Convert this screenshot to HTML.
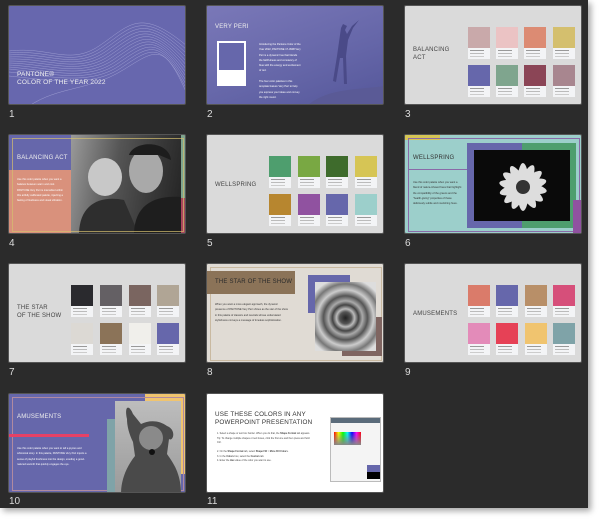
<!DOCTYPE html>
<html><head><meta charset="utf-8"><style>
*{margin:0;padding:0;box-sizing:border-box}
body{width:600px;height:520px;background:#fff;position:relative;overflow:hidden;font-family:"Liberation Sans",sans-serif}
#panel{position:absolute;left:0;top:0;width:588px;height:508px;background:#2b2b2b;box-shadow:3px 3px 6px rgba(0,0,0,.35)}
.s{position:absolute;width:178px;height:100px;border-radius:2px;overflow:hidden;border:1px solid #555}
.n{position:absolute;color:#ddd;font-size:10px}
.a{position:absolute}
.sw{position:absolute;width:22px;height:32px;background:#f3f4f6}
.sw i{display:block;height:21px}
.sw b{display:block;margin:2px 2px 0;height:1px;background:#999;width:14px;box-shadow:0 3px 0 #bbb,0 6px 0 #ccc}
.t{position:absolute;font-size:7.5px;letter-spacing:.2px}
.p{position:absolute;font-size:2.6px;line-height:5.3px;color:#fff}
</style></head><body>
<div id="panel">

<!-- 1 -->
<div class="s" style="left:8px;top:5px;background:#6767ae">
<svg class="a" width="178" height="100" style="left:0;top:0">
<g fill="none" stroke="#c8c8ee" stroke-width=".35" opacity=".8">
<path d="M0 45 C40 40 60 60 90 40 S130 0 178 40"/>
<path d="M0 47 C40 43 62 62 92 42 S132 3 178 44"/>
<path d="M0 49 C40 46 64 64 94 44 S134 6 178 48"/>
<path d="M0 51 C40 49 66 66 96 46 S136 9 178 52"/>
<path d="M0 53 C40 52 68 68 98 48 S138 12 178 56"/>
<path d="M0 55 C40 55 70 70 100 50 S140 15 178 60"/>
<path d="M0 57 C40 58 72 72 102 52 S142 18 178 64"/>
<path d="M0 59 C40 61 74 74 104 54 S144 21 178 68"/>
<path d="M0 61 C40 64 76 76 106 56 S146 24 178 72"/>
<path d="M0 63 C40 67 78 78 108 58 S148 27 178 76"/>
<path d="M0 66 C40 70 80 80 110 60 S150 30 178 80"/>
<path d="M0 70 C40 74 82 82 112 62 S152 33 178 84"/>
<path d="M20 100 C50 80 80 85 114 64 S155 36 178 88"/>
</g></svg>
<div class="t" style="left:8px;top:65px;color:#eee;font-size:6.5px;line-height:8px">PANTONE®<br>COLOR OF THE YEAR 2022</div>
</div>
<div class="n" style="left:9px;top:109px">1</div>

<!-- 2 -->
<div class="s" style="left:206px;top:5px;background:linear-gradient(160deg,#7a78b8,#6566a8 60%,#55579a)">
<div class="t" style="left:8px;top:18px;color:#eee;font-size:6px">VERY PERI</div>
<div class="a" style="left:10px;top:35px;width:29px;height:45px;background:#fff"><div style="margin:2px;height:27px;background:#6667ab"></div></div>
<div class="p" style="left:52px;top:36px;width:42px">Introducing the Pantone Color of the Year 2022, PANTONE 17-3938 Very Peri is a dynamic hue that blends the faithfulness and constancy of blue with the energy and excitement of red.<br><br>The four color palettes in this template feature Very Peri to help you express your ideas and convey the right mood.</div>
<svg class="a" width="178" height="100" style="left:0;top:0">
<path d="M128 14 L134 22 L132 36 L130 50 L126 75 L129 76 L133 52 L136 52 L137 78 L140 78 L139 50 L141 34 L146 22 L152 14 L145 20 L140 28 L138 24 L140 20 L136 18 L134 22 Z" fill="#4a4a88"/>
<path d="M100 100 C120 82 150 84 178 80 L178 100Z" fill="#5a5a96"/></svg>
</div>
<div class="n" style="left:207px;top:109px">2</div>

<!-- 3 -->
<div class="s" style="left:404px;top:5px;background:#dadada">
<div class="t" style="left:8px;top:40px;color:#444;font-size:6px;line-height:8px">BALANCING<br>ACT</div>
<div class="sw" style="left:63px;top:21px"><i style="background:#c9a9aa"></i><b></b></div>
<div class="sw" style="left:91px;top:21px"><i style="background:#ebc3c4"></i><b></b></div>
<div class="sw" style="left:119px;top:21px"><i style="background:#dc8b73"></i><b></b></div>
<div class="sw" style="left:148px;top:21px"><i style="background:#d4bf6e"></i><b></b></div>
<div class="sw" style="left:63px;top:59px"><i style="background:#6667ab"></i><b></b></div>
<div class="sw" style="left:91px;top:59px"><i style="background:#7fa58e"></i><b></b></div>
<div class="sw" style="left:119px;top:59px"><i style="background:#8b4556"></i><b></b></div>
<div class="sw" style="left:148px;top:59px"><i style="background:#a8868f"></i><b></b></div>
</div>
<div class="n" style="left:405px;top:109px">3</div>

<!-- 4 -->
<div class="s" style="left:8px;top:134px;background:#777">
<div class="a" style="left:62px;top:0;width:110px;height:100px;background:linear-gradient(100deg,#9a9a9a,#555 40%,#3a3a3a 70%,#222)"></div>
<svg class="a" width="178" height="100" style="left:0;top:0">
<ellipse cx="96" cy="42" rx="17" ry="19" fill="#c8c8c8"/>
<ellipse cx="137" cy="36" rx="17" ry="22" fill="#a9a9a9"/>
<path d="M120 20 C125 5 160 5 162 25 L150 20 Z" fill="#1d1d1d"/>
<path d="M70 100 C70 70 90 60 115 65 L130 100Z" fill="#2e2e2e"/>
<path d="M125 100 C125 70 145 60 172 62 L172 100Z" fill="#1e1e1e"/></svg>
<div class="a" style="left:0;top:0;width:62px;height:35px;background:#6667ab"></div>
<div class="t" style="left:8px;top:20px;color:#eee;font-size:6px">BALANCING ACT</div>
<div class="a" style="left:0;top:35px;width:62px;height:65px;background:#d9917c"></div>
<div class="p" style="left:8px;top:42px;width:50px">Use this color palette when you want a balance between warm and cool. PANTONE Very Peri is intensified within this artfully calibrated palette, injecting a feeling of liveliness and visual vibration.</div>
<div class="a" style="left:172px;top:0;width:6px;height:63px;background:#7fa58e"></div>
<div class="a" style="left:172px;top:63px;width:6px;height:37px;background:#a9465c"></div>
<div class="a" style="left:3px;top:3px;width:172px;height:94px;border:1px solid rgba(212,191,110,.7)"></div>
</div>
<div class="n" style="left:9px;top:238px">4</div>

<!-- 5 -->
<div class="s" style="left:206px;top:134px;background:#dadada">
<div class="t" style="left:8px;top:47px;color:#444;font-size:6px">WELLSPRING</div>
<div class="sw" style="left:62px;top:21px"><i style="background:#4e9e6e"></i><b></b></div>
<div class="sw" style="left:91px;top:21px"><i style="background:#79a843"></i><b></b></div>
<div class="sw" style="left:119px;top:21px"><i style="background:#3e6b2c"></i><b></b></div>
<div class="sw" style="left:148px;top:21px"><i style="background:#d6c555"></i><b></b></div>
<div class="sw" style="left:62px;top:59px"><i style="background:#b7862f"></i><b></b></div>
<div class="sw" style="left:91px;top:59px"><i style="background:#9052a0"></i><b></b></div>
<div class="sw" style="left:119px;top:59px"><i style="background:#6667ab"></i><b></b></div>
<div class="sw" style="left:148px;top:59px"><i style="background:#9ccfcb"></i><b></b></div>
</div>
<div class="n" style="left:207px;top:238px">5</div>

<!-- 6 -->
<div class="s" style="left:404px;top:134px;background:#9ccfcb">
<div class="a" style="left:0;top:0;width:35px;height:5px;background:#d6c555"></div>
<div class="a" style="left:3px;top:3px;width:172px;height:94px;border:1px solid #8a6aa8"></div>
<div class="a" style="left:3px;top:34px;width:59px;height:1px;background:#8a6aa8"></div>
<div class="t" style="left:8px;top:20px;color:#333;font-size:6px">WELLSPRING</div>
<div class="p" style="left:8px;top:45px;width:50px;color:#333">Use this color palette when you want a blend of nature-infused hues that highlight the compatibility of the greens and the "health-giving" properties of these deliciously subtle and nourishing hues.</div>
<div class="a" style="left:62px;top:8px;width:55px;height:85px;background:#6667ab"></div>
<div class="a" style="left:117px;top:8px;width:54px;height:85px;background:#4e9e6e"></div>
<div class="a" style="left:168px;top:65px;width:10px;height:35px;background:#9052a0"></div>
<div class="a" style="left:69px;top:15px;width:96px;height:71px;background:#0a0a0a"></div>
<svg class="a" width="178" height="100" style="left:0;top:0">
<g fill="#ddd" transform="translate(118 52)">
<ellipse rx="6" ry="24" transform="rotate(0)"/><ellipse rx="6" ry="24" transform="rotate(25)"/><ellipse rx="6" ry="24" transform="rotate(50)"/><ellipse rx="6" ry="24" transform="rotate(75)"/><ellipse rx="6" ry="24" transform="rotate(100)"/><ellipse rx="6" ry="24" transform="rotate(125)"/><ellipse rx="6" ry="24" transform="rotate(150)"/>
<circle r="7" fill="#333"/></g></svg>
</div>
<div class="n" style="left:405px;top:238px">6</div>

<!-- 7 -->
<div class="s" style="left:8px;top:263px;background:#dadada">
<div class="t" style="left:8px;top:40px;color:#444;font-size:6px;line-height:8px">THE STAR<br>OF THE SHOW</div>
<div class="sw" style="left:62px;top:21px"><i style="background:#2a2a2e"></i><b></b></div>
<div class="sw" style="left:91px;top:21px"><i style="background:#646064"></i><b></b></div>
<div class="sw" style="left:120px;top:21px"><i style="background:#7a6560"></i><b></b></div>
<div class="sw" style="left:148px;top:21px"><i style="background:#b0a595"></i><b></b></div>
<div class="sw" style="left:62px;top:59px"><i style="background:#dcd9d4"></i><b></b></div>
<div class="sw" style="left:91px;top:59px"><i style="background:#8b7358"></i><b></b></div>
<div class="sw" style="left:120px;top:59px"><i style="background:#f0efeb"></i><b></b></div>
<div class="sw" style="left:148px;top:59px"><i style="background:#6667ab"></i><b></b></div>
</div>
<div class="n" style="left:9px;top:367px">7</div>

<!-- 8 -->
<div class="s" style="left:206px;top:263px;background:#e0dbd4">
<div class="a" style="left:3px;top:3px;width:172px;height:94px;border:1px solid #c9b9a0"></div>
<div class="a" style="left:0;top:7px;width:88px;height:23px;background:#8b7358"></div>
<div class="t" style="left:8px;top:15px;color:#2a2a2a;font-size:6px">THE STAR OF THE SHOW</div>
<div class="p" style="left:8px;top:38px;width:74px;color:#333">When you want a more elegant approach, the dynamic presence of PANTONE Very Peri shines as the star of the show in this palette of classics and neutrals whose understated stylishness conveys a message of timeless sophistication.</div>
<div class="a" style="left:101px;top:11px;width:42px;height:38px;background:#6667ab"></div>
<div class="a" style="left:135px;top:53px;width:40px;height:39px;background:#7f6561"></div>
<div class="a" style="left:108px;top:18px;width:61px;height:69px;background:radial-gradient(circle at 50% 52%,#222 0,#555 6px,#bbb 9px,#444 13px,#aaa 17px,#555 22px,#ccc 28px,#777 34px,#ddd 40px)"></div>
</div>
<div class="n" style="left:207px;top:367px">8</div>

<!-- 9 -->
<div class="s" style="left:404px;top:263px;background:#dadada">
<div class="t" style="left:8px;top:47px;color:#444;font-size:6px">AMUSEMENTS</div>
<div class="sw" style="left:63px;top:21px"><i style="background:#da7b6a"></i><b></b></div>
<div class="sw" style="left:91px;top:21px"><i style="background:#6667ab"></i><b></b></div>
<div class="sw" style="left:120px;top:21px"><i style="background:#b88f68"></i><b></b></div>
<div class="sw" style="left:148px;top:21px"><i style="background:#d64f7a"></i><b></b></div>
<div class="sw" style="left:63px;top:59px"><i style="background:#e38bb9"></i><b></b></div>
<div class="sw" style="left:91px;top:59px"><i style="background:#e64156"></i><b></b></div>
<div class="sw" style="left:120px;top:59px"><i style="background:#f0c46f"></i><b></b></div>
<div class="sw" style="left:148px;top:59px"><i style="background:#7fa3a8"></i><b></b></div>
</div>
<div class="n" style="left:405px;top:367px">9</div>

<!-- 10 -->
<div class="s" style="left:8px;top:393px;background:#6667ab">
<div class="a" style="left:136px;top:0;width:42px;height:80px;background:#f0c46f"></div>
<div class="a" style="left:3px;top:3px;width:172px;height:94px;border:1px solid #b08aa0"></div>
<div class="a" style="left:98px;top:25px;width:8px;height:75px;background:#7fa3a8"></div>
<div class="a" style="left:106px;top:7px;width:66px;height:93px;background:linear-gradient(#bdbdbd,#9a9a9a)"></div>
<svg class="a" width="178" height="100" style="left:0;top:0">
<path d="M118 25 C115 12 120 10 124 20 L132 30 C140 26 150 26 158 32 C168 36 164 48 160 45 L158 60 C165 70 172 80 172 100 L112 100 C112 85 118 72 126 62 L124 48 C120 40 118 32 118 25Z" fill="#4a4a4a"/>
<ellipse cx="142" cy="44" rx="12" ry="12" fill="#8a8a8a"/>
<circle cx="143" cy="58" r="3" fill="#111"/></svg>
<div class="t" style="left:8px;top:20px;color:#eee;font-size:6px">AMUSEMENTS</div>
<div class="a" style="left:0;top:40px;width:80px;height:3px;background:#e64166"></div>
<div class="p" style="left:8px;top:52px;width:75px">Use this color palette when you want to tell a joyous and whimsical story. In this palette, PANTONE Very Peri injects a sense of playful freshness into the design, exuding a good-natured warmth that quickly engages the eye.</div>
</div>
<div class="n" style="left:9px;top:496px">10</div>

<!-- 11 -->
<div class="s" style="left:206px;top:393px;background:#fff">
<div class="t" style="left:8px;top:17px;color:#333;font-size:6.3px;line-height:8px">USE THESE COLORS IN ANY<br>POWERPOINT PRESENTATION</div>
<div class="p" style="left:10px;top:38px;width:95px;color:#444;font-size:2.4px;line-height:4.5px">1. Select a shape or text box border. When you do that, the <b>Shape Format</b> tab appears.<br>Tip: To change multiple shapes or text boxes, click the first one and then press and hold Ctrl.<br><br>2. On the <b>Shape Format</b> tab, select <b>Shape Fill</b> &gt; <b>More Fill Colors</b>.<br>3. In the <b>Colors</b> box, select the <b>Custom</b> tab.<br>4. Enter the <b>Hex</b> value of the color you want to use.</div>
<div class="a" style="left:123px;top:23px;width:51px;height:65px;background:#f4f4f4;border:1px solid #bbb">
<div style="height:5px;background:#5a6b7a"></div>
<div class="a" style="left:3px;top:14px;width:27px;height:13px;background:linear-gradient(90deg,#f00,#ff0,#0f0,#0ff,#00f,#f0f,#f00)"></div>
<div class="a" style="left:3px;top:14px;width:27px;height:13px;background:linear-gradient(transparent,#888)"></div>
<div class="a" style="left:36px;top:47px;width:13px;height:7px;background:#6667ab"></div>
<div class="a" style="left:36px;top:54px;width:13px;height:7px;background:#000"></div>
</div>
</div>
<div class="n" style="left:207px;top:496px">11</div>

</div>
</body></html>
